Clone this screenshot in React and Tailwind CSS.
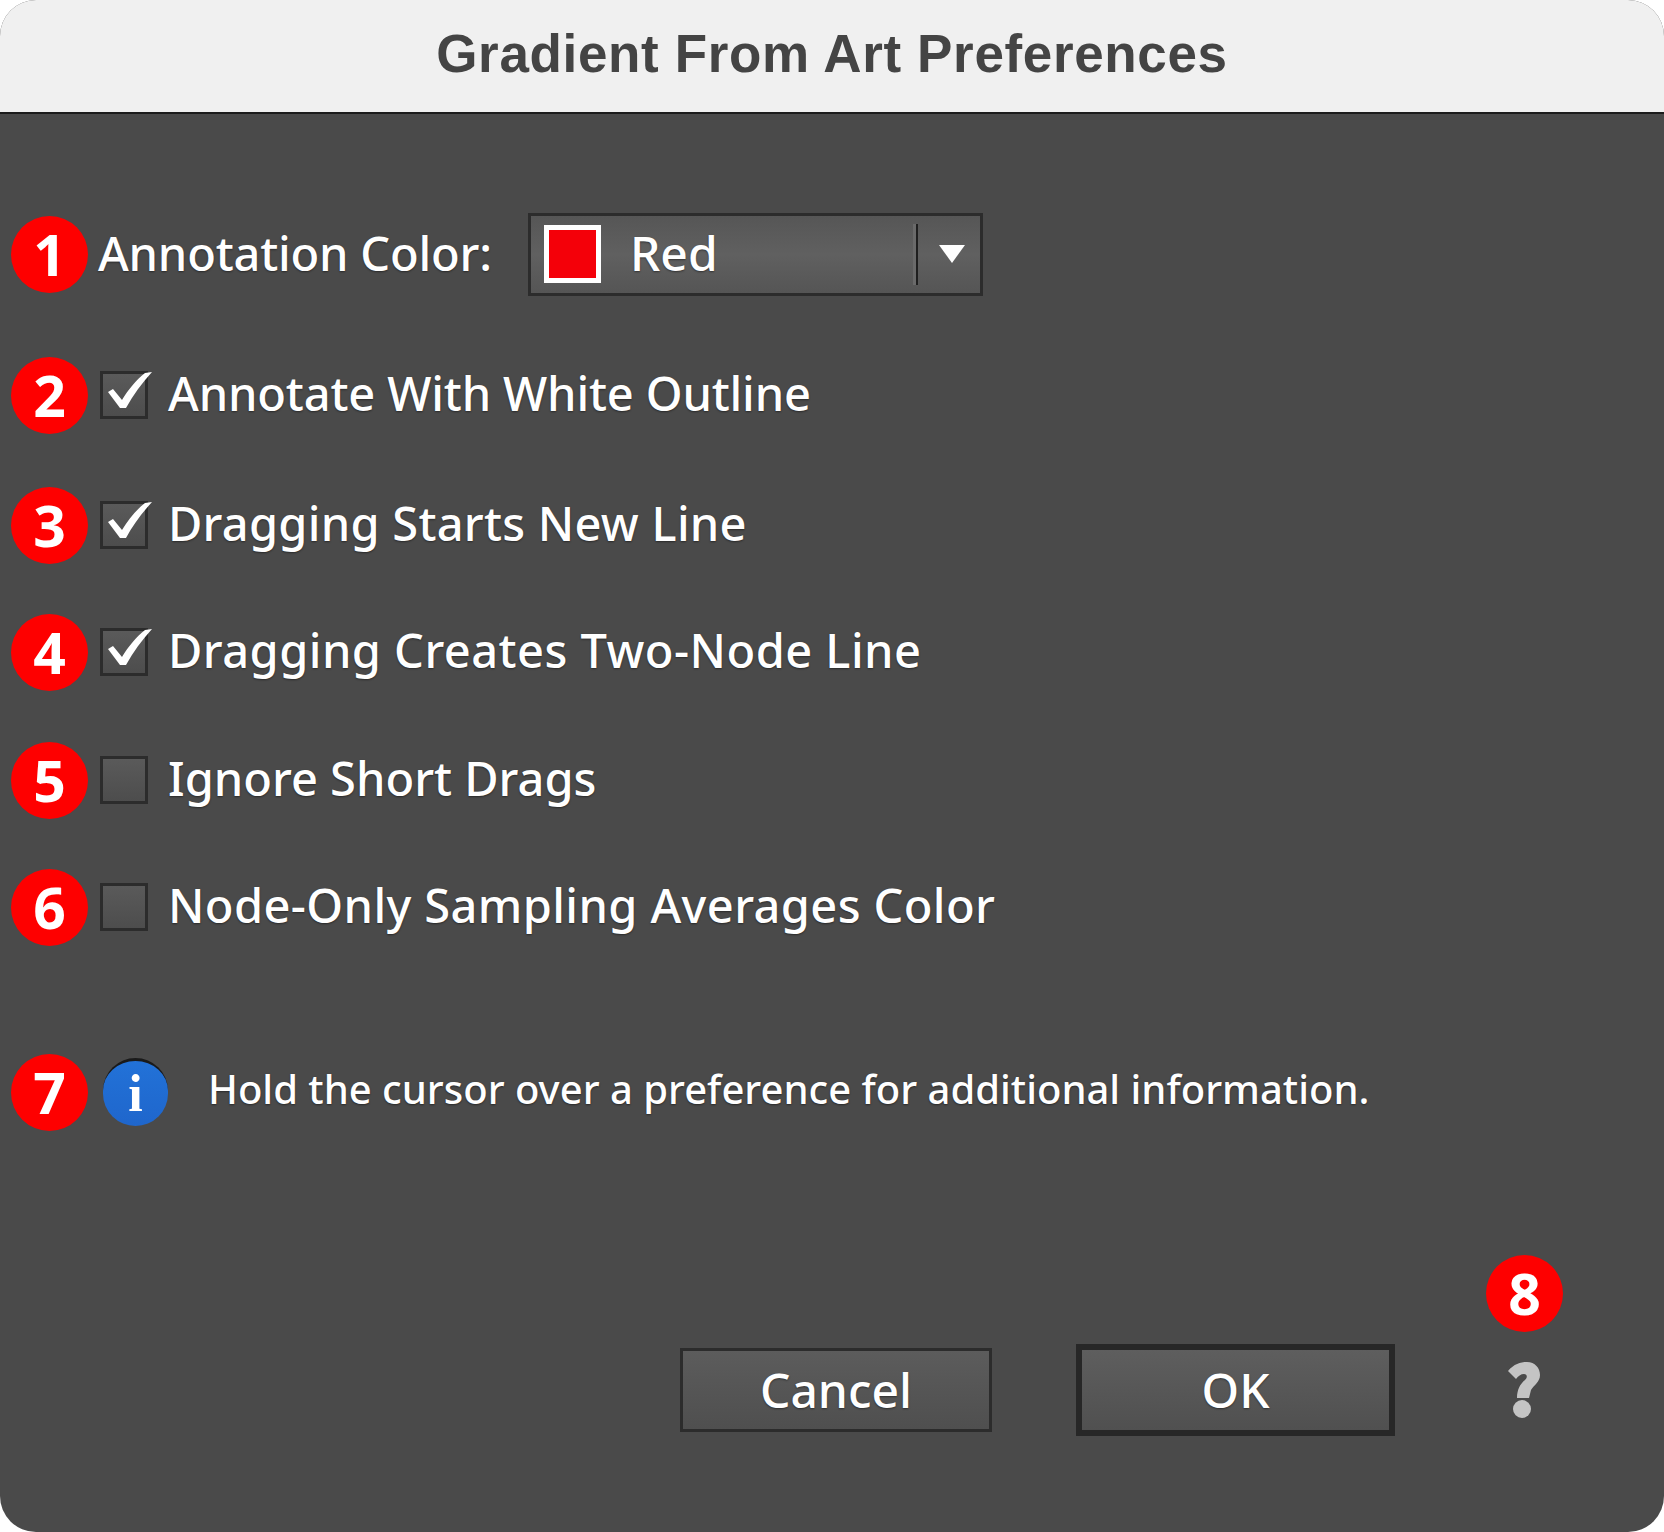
const textStyle = "font-['Noto_Sans',sans-serif] font-medium leading-none text-white [text-shadow:0_1px_2px_rgba(0,0,0,0.45)]";

function Badge({ n }) {
  return (
    <div className="flex h-[77px] w-[77px] shrink-0 items-center justify-center rounded-full bg-[#fe0000] font-['Open_Sans',sans-serif] text-[57px] font-bold leading-none text-white">
      {n}
    </div>
  );
}

function CheckRow({ n, label, checked, className, labelClass }) {
  return (
    <div className={`flex h-[76px] items-center pl-[11px] ${className}`}>
      <Badge n={n} />
      <div className="relative ml-3 h-[48px] w-[48px] border-[3px] border-[#2c2c2c] bg-gradient-to-b from-[#5a5a5a] to-[#4d4d4d]">
        {checked && (
          <svg className="absolute -top-[3px] left-[5px] overflow-visible" width="46" height="38" viewBox="0 0 46 38">
            <path d="M0 21 L5 18 L14 29 C20 19 28 9 37 2 L44 1 C34 12 25 24 18 37 L12 37 Z" fill="#fff" />
          </svg>
        )}
      </div>
      <span className={`ml-5 pb-[3px] text-[47px] ${textStyle} ${labelClass}`}>{label}</span>
    </div>
  );
}

export default function App() {
  return (
    <div className="h-[1532px] w-[1664px] bg-white">
      <div className="flex h-full flex-col overflow-hidden rounded-[36px] bg-[#4a4a4a]">
        <div className="flex h-[114px] shrink-0 items-center justify-center border-b-2 border-[#1c1c1c] bg-[#f0f0f0] pb-1 font-['Liberation_Sans',sans-serif] text-[53px] font-bold tracking-[0.65px] text-[#444444]">
          Gradient From Art Preferences
        </div>

        <div className="mt-[102px] flex h-[76px] items-center pl-[11px]">
          <Badge n="1" />
          <span className={`ml-[10px] w-[430px] pb-[2px] text-[47px] tracking-[-0.19px] ${textStyle}`}>Annotation Color:</span>
          <div className="flex h-[83px] w-[455px] items-center border-[3px] border-[#2c2c2c] bg-gradient-to-b from-[#565656] via-[#606060] to-[#555555] pl-[13px]">
            <div className="h-[58px] w-[57px] border-[5px] border-white bg-[#f40009]" />
            <span className={`ml-[29px] flex-1 pb-[2px] text-[48px] ${textStyle}`}>Red</span>
            <div className="h-[61px] w-[5px] border-r-2 border-[#1f1f1f] bg-[#6a6a6a]" />
            <div className="ml-[21px] mr-[15px] h-0 w-0 border-x-[13px] border-t-[18px] border-x-transparent border-t-white" />
          </div>
        </div>

        <CheckRow n="2" label="Annotate With White Outline" checked className="mt-[65px]" labelClass="tracking-[-0.15px]" />
        <CheckRow n="3" label="Dragging Starts New Line" checked className="mt-[54px]" labelClass="tracking-[0.26px]" />
        <CheckRow n="4" label="Dragging Creates Two-Node Line" checked className="mt-[51px]" labelClass="tracking-[0.46px]" />
        <CheckRow n="5" label="Ignore Short Drags" className="mt-[52px]" />
        <CheckRow n="6" label="Node-Only Sampling Averages Color" className="mt-[51px]" labelClass="tracking-[0.39px]" />

        <div className="mt-[109px] flex h-[76px] items-center pl-[11px]">
          <Badge n="7" />
          <div className="ml-[15px] flex h-[68px] w-[65px] items-center justify-center rounded-full border-t-[3px] border-[#1a1a1a] bg-gradient-to-b from-[#2272d8] to-[#1f66cc] font-['Liberation_Serif',serif] text-[52px] font-bold leading-none text-white">
            i
          </div>
          <span className={`ml-10 pb-[6px] text-[40px] ${textStyle}`}>
            Hold the cursor over a preference for additional information.
          </span>
        </div>

        <div className="mt-[214px] flex h-[92px] items-center justify-end pr-[124px]">
          <div className={`flex h-[84px] w-[312px] items-center justify-center border-[3px] border-[#2c2c2c] bg-gradient-to-b from-[#5c5c5c] to-[#4f4f4f] text-[48px] ${textStyle}`}>
            Cancel
          </div>
          <div className={`ml-[84px] flex h-[92px] w-[319px] items-center justify-center border-[6px] border-[#272727] bg-gradient-to-b from-[#5e5e5e] to-[#505050] text-[48px] ${textStyle}`}>
            OK
          </div>
          <div className="relative ml-[111px] h-[56px] w-[34px]">
            <svg className="overflow-visible blur-[0.6px]" width="34" height="56" viewBox="0 0 34 56">
              <path d="M2 9 C8 2 14 0 21 0 C29 0 34 6 34 13 C34 20 28 23 25 28 L23 36 L11 36 C11 28 14 22 19 18 C22 15 21 12 18 12 C15 12 12 14 10 17 Z" fill="#c4c4c4" />
              <circle cx="16" cy="47" r="9" fill="#c4c4c4" />
            </svg>
            <div className="absolute -left-5 -top-[107px]">
              <Badge n="8" />
            </div>
          </div>
        </div>
      </div>
    </div>
  );
}
